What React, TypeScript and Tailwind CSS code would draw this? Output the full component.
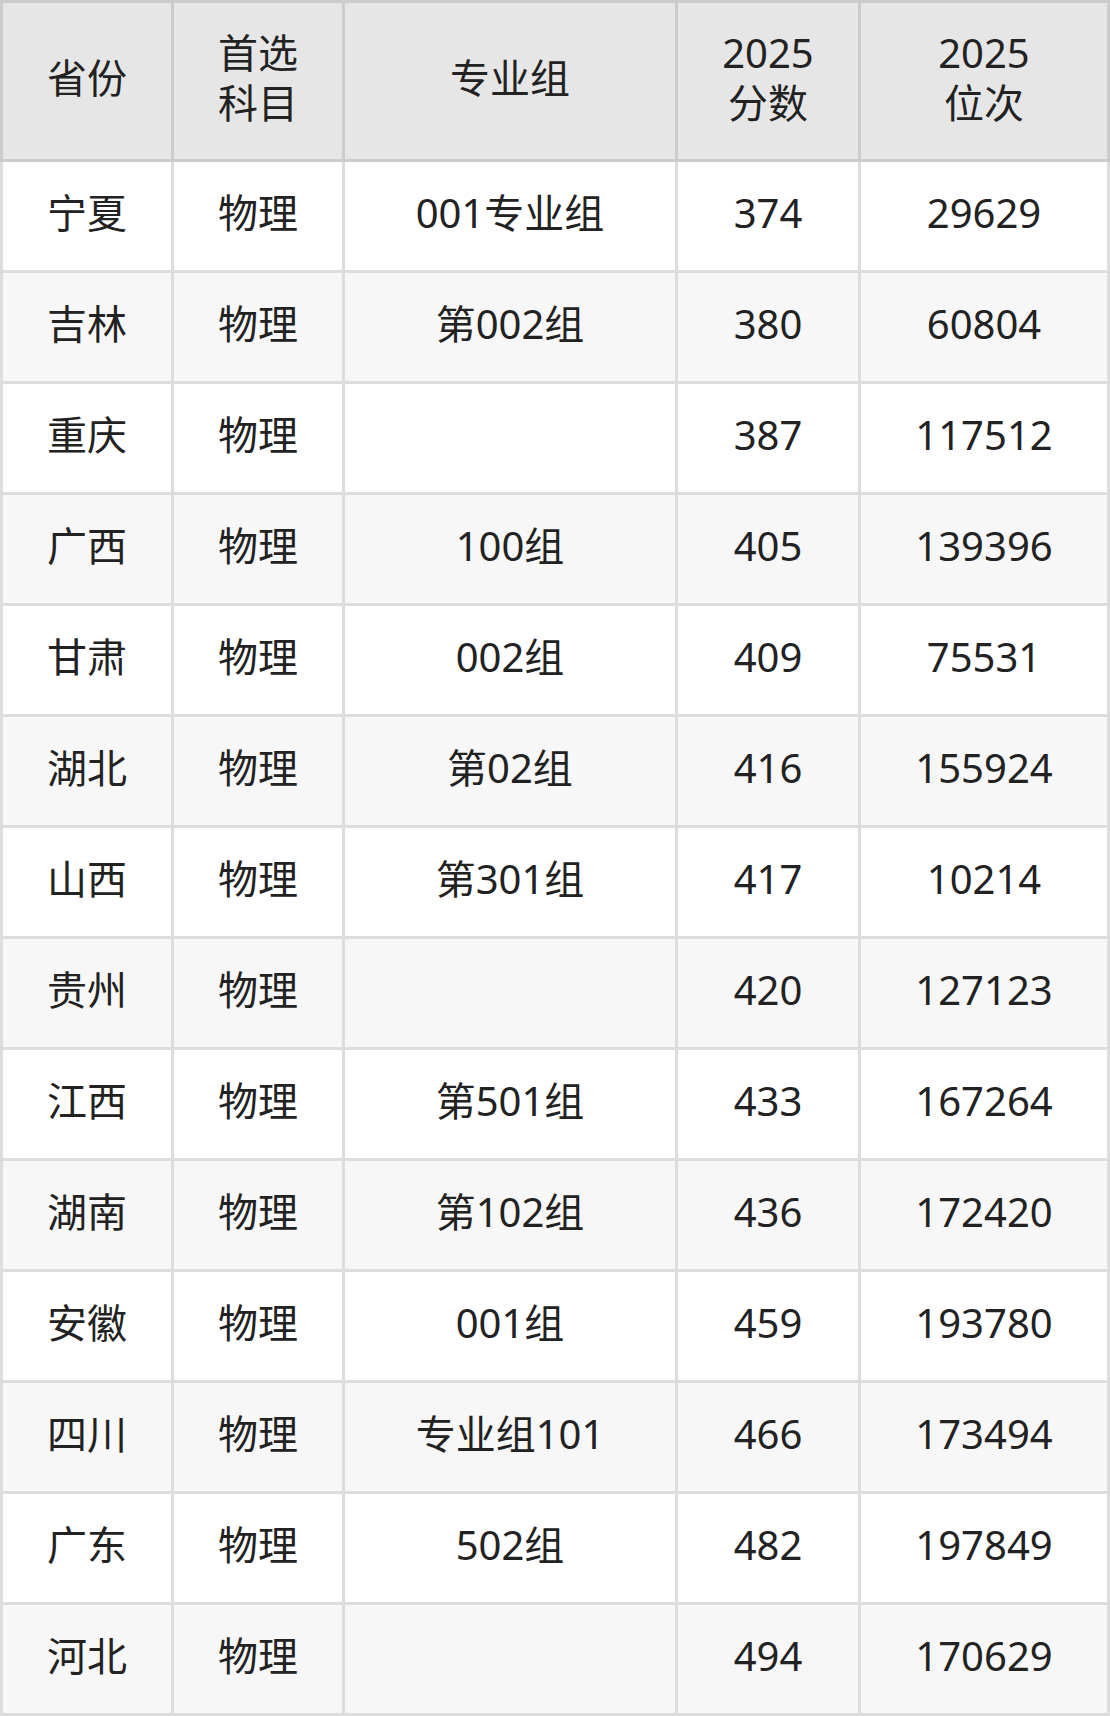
const HEADERS = [['省份'], ['首选', '科目'], ['专业组'], ['2025', '分数'], ['2025', '位次']];

const ROWS = [
  ['宁夏', '物理', '001专业组', '374', '29629'],
  ['吉林', '物理', '第002组', '380', '60804'],
  ['重庆', '物理', '', '387', '117512'],
  ['广西', '物理', '100组', '405', '139396'],
  ['甘肃', '物理', '002组', '409', '75531'],
  ['湖北', '物理', '第02组', '416', '155924'],
  ['山西', '物理', '第301组', '417', '10214'],
  ['贵州', '物理', '', '420', '127123'],
  ['江西', '物理', '第501组', '433', '167264'],
  ['湖南', '物理', '第102组', '436', '172420'],
  ['安徽', '物理', '001组', '459', '193780'],
  ['四川', '物理', '专业组101', '466', '173494'],
  ['广东', '物理', '502组', '482', '197849'],
  ['河北', '物理', '', '494', '170629'],
];

const COLS = 'grid grid-cols-[168px_168px_330px_180px_246px] gap-[3px]';

export default function App() {
  return (
    <div
      className="w-[1110px] text-[40px] text-[#222222]"
      style={{ fontFamily: '"Noto Sans", "Noto Sans CJK SC", sans-serif' }}
    >
      <div className={`${COLS} bg-[#cccccc] p-[3px]`}>
        {HEADERS.map((lines, i) => (
          <div
            key={i}
            className="h-[156px] pb-[6px] bg-[#e6e6e6] flex flex-col items-center justify-center leading-[50px]"
          >
            {lines.map((l) => (
              <div key={l}>{l}</div>
            ))}
          </div>
        ))}
      </div>
      <div className={`${COLS} bg-[#dddddd] px-[3px] pb-[3px]`}>
        {ROWS.map((row, r) =>
          row.map((cell, c) => (
            <div
              key={`${r}-${c}`}
              className={`h-[108px] pb-[6px] flex items-center justify-center ${
                r % 2 === 0 ? 'bg-white' : 'bg-[#f7f7f7]'
              }`}
            >
              {cell}
            </div>
          ))
        )}
      </div>
    </div>
  );
}
